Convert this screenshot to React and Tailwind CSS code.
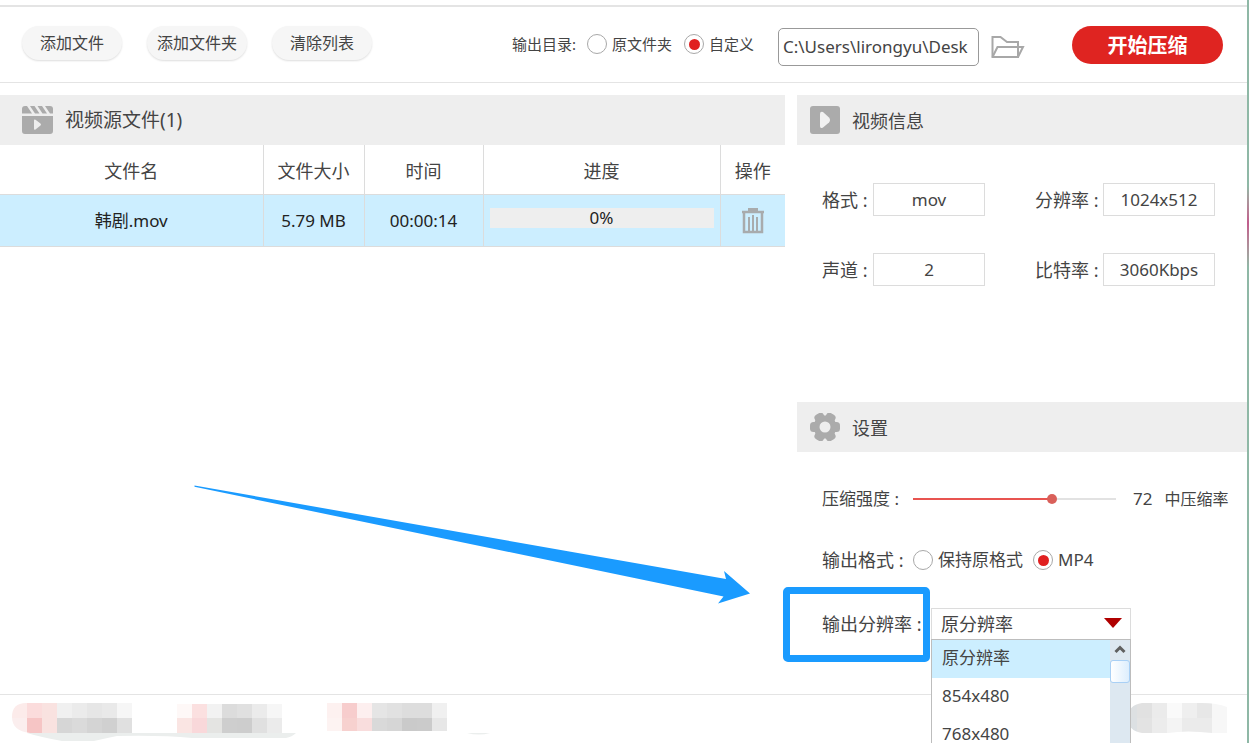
import { useState } from 'react'

const RESOLUTIONS = ['原分辨率', '854x480', '768x480']

const FILES = [
  { name: '韩剧.mov', size: '5.79 MB', time: '00:00:14', progress: 0 },
]

const MOSAICS = [
  {
    className: 'ml-3 w-[120px]',
    clip: 'M14 0 H120 V30 H18 Q0 28 0 14 Q0 0 14 0Z',
    smear: 'M15 30 H284 Q280 34 274 35 H180 Q150 32 105 33 Q95 35 82 38 H50 Q28 34 15 30Z',
    rows: [
      ['#fcebea', '#fbdcdc', '#f9e2e0', '#f0f0f0', '#ebebeb', '#e6e6e6', '#e9e9e9', '#f6f6f6'],
      ['#fbeeee', '#f6c5c5', '#f9e2e0', '#d6d6d6', '#dadada', '#d4d4d4', '#d0d0d0', '#e0e0e0'],
    ],
  },
  {
    className: 'ml-[45px] w-[105px]',
    clip: 'M0 1 H105 V30 H0Z',
    rows: [
      ['#fef8f7', '#fbe0e0', '#f2f2f2', '#dcdcdc', '#e0e0e0', '#ebebeb', '#f6f6f6'],
      ['#fae5e3', '#f9d8da', '#e4e4e2', '#cecece', '#cdcdcd', '#e0e0e0', '#ebebeb'],
    ],
  },
  {
    className: 'ml-[45px] w-[120px]',
    clip: 'M0 0 H120 V28 H0Z',
    smear: 'M140 30 H163 Q152 33 140 30Z',
    rows: [
      ['#fdf1f0', '#f7cdcd', '#fdefef', '#e5e5e5', '#e1e1e1', '#dddddd', '#dddddd', '#f0f0f0'],
      ['#fdf3f2', '#f7d1cf', '#f9dddd', '#d9d9d9', '#d6d6d6', '#cacaca', '#cbcbcb', '#e7e7e7'],
    ],
  },
]

const RIGHT_MOSAIC = {
  className: 'ml-auto mr-5 w-[105px]',
  clip: 'M20 0 Q60 -1 80 0 Q95 0 105 4 V30 H90 Q65 27 46 30 H20 Q6 28 6 15 Q6 2 20 0Z',
  rows: [
    ['#dde0e2', '#e1e1e1', '#ebebeb', '#fafafa', '#efefef', '#e7e7e7', '#f7f7f7'],
    ['#dce0e3', '#e3e3e3', '#ececec', '#f4f4f4', '#ebebeb', '#ebebeb', '#f7f7f7'],
  ],
}

function Mosaic({ id, rows, clip, smear, className }) {
  return (
    <svg className={`h-[30px] shrink-0 overflow-visible ${className}`} viewBox={`0 0 ${rows[0].length * 15} 30`} aria-hidden="true">
      <clipPath id={id}>
        <path d={clip} />
      </clipPath>
      {smear ? <path d={smear} fill="#ebeeed" /> : null}
      <g clipPath={`url(#${id})`} shapeRendering="crispEdges">
        {rows.map((row, y) => row.map((fill, x) => (
          <rect key={`${x}-${y}`} x={x * 15} y={y * 15} width="15" height="15" fill={fill} />
        )))}
      </g>
    </svg>
  )
}

function ClapperIcon() {
  return (
    <svg className="h-7 w-[31px]" viewBox="0 0 31 28" fill="#ababab" aria-hidden="true">
      <path d="M3 0 H5 L10 7.5 H0 V3 Q0 0 3 0Z" />
      <path d="M8 0 H12.5 L17.5 7.5 H13Z" />
      <path d="M15.5 0 H20 L25 7.5 H20.5Z" />
      <path d="M23 0 H28 Q31 0 31 3 V7.5 H28Z" />
      <path fillRule="evenodd" d="M0 10 H31 V25 Q31 28 28 28 H3 Q0 28 0 25Z M12 14.5 V22.5 Q12 24.5 13.5 23.5 L18.5 19.5 Q19.5 18.5 18.5 17.5 L13.5 13.8 Q12 13 12 14.5Z" />
    </svg>
  )
}

function PlayIcon() {
  return (
    <svg className="h-7 w-[30px]" viewBox="0 0 30 28" aria-hidden="true">
      <rect width="30" height="28" rx="3" fill="#ababab" />
      <path d="M10 8 Q10 5 13 6 L19 11.500 Q21 14 19 16.500 L13 21.500 Q10 23 10 20Z" fill="#f2f2f2" />
    </svg>
  )
}

function GearIcon() {
  return (
    <svg className="h-7 w-[30px]" viewBox="0 0 30 28" fill="#ababab" aria-hidden="true">
      <circle cx="15" cy="14" r="11.500" />
      {[0, 60, 120].map((angle) => (
        <rect key={angle} x="0" y="9" width="30" height="10" rx="3.500" transform={`rotate(${angle} 15 14)`} />
      ))}
      <circle cx="15" cy="14" r="5.500" fill="#eeeeee" />
    </svg>
  )
}

function TrashIcon() {
  return (
    <svg className="h-[26px] w-6" viewBox="0 0 24 26" fill="none" stroke="#a8abad" aria-hidden="true">
      <path d="M7 1.500 H17" strokeWidth="3" />
      <path d="M1 4 H23" strokeWidth="2.500" />
      <path d="M3 4 V24 H21 V4" strokeWidth="2.500" />
      <path d="M8 9 V23 M12 7 V23 M16 9 V23" strokeWidth="2" />
    </svg>
  )
}

function FolderIcon() {
  return (
    <svg className="h-6 w-[34px]" viewBox="0 0 34 24" fill="none" stroke="#a8a8a8" strokeWidth="2" aria-hidden="true">
      <path d="M1.500 22 V2 H9.500 L16 7 H27 V22Z" />
      <path d="M1.500 22 L6.500 12 H32 L27 22" />
    </svg>
  )
}

function PanelHeader({ icon, children, className = 'pl-[13px]' }) {
  return (
    <div className={`flex h-[50px] shrink-0 items-center gap-3 bg-[#eeeeee] ${className}`}>
      {icon}
      <h2 className="pt-[2px]">{children}</h2>
    </div>
  )
}

function ToolButton({ children }) {
  return (
    <button type="button" className="h-[34px] w-[100px] whitespace-nowrap rounded-full bg-[#f6f6f6] text-base shadow-[0_1px_2px_#00000022]">
      {children}
    </button>
  )
}

function Radio({ name, label, checked, onChange }) {
  return (
    <label className="flex items-center gap-[5px] whitespace-nowrap">
      <input
        type="radio"
        name={name}
        checked={checked}
        onChange={onChange}
        className="grid size-5 appearance-none place-content-center rounded-full border border-[#a8a8a8] bg-white before:size-[11px] before:rounded-full checked:before:bg-[#e02020]"
      />
      {label}
    </label>
  )
}

function InfoField({ id, label, value, labelClass }) {
  return (
    <div className="flex items-center">
      <label htmlFor={id} className={`whitespace-nowrap ${labelClass}`}>{label} :</label>
      <input id={id} readOnly value={value} className="h-[33px] w-28 border border-[#dcdcdc] bg-white text-center text-[17px]" />
    </div>
  )
}

function FileTable() {
  return (
    <table className="w-full table-fixed border-collapse text-center">
      <colgroup>
        <col />
        <col className="w-[101px]" />
        <col className="w-[119px]" />
        <col className="w-[237px]" />
        <col className="w-[65px]" />
      </colgroup>
      <thead>
        <tr className="h-[49px] border-b border-[#dcdcdc]">
          {['文件名', '文件大小', '时间', '进度', '操作'].map((title) => (
            <th key={title} className="border-r border-[#dcdcdc] pt-1 font-normal last:border-r-0">{title}</th>
          ))}
        </tr>
      </thead>
      <tbody className="text-[17px]">
        {FILES.map((file) => (
          <tr key={file.name} className="h-[52px] border-b border-[#dcdcdc] bg-[#cceeff] text-[#222222]">
            <td className="border-r border-[#dcdcdc] pt-[2px]">{file.name}</td>
            <td className="border-r border-[#dcdcdc] pt-[2px]">{file.size}</td>
            <td className="border-r border-[#dcdcdc] pt-[2px]">{file.time}</td>
            <td className="border-r border-[#dcdcdc] px-[6px] pb-1">
              <div role="progressbar" aria-valuenow={file.progress} className="h-5 bg-[#eeeeee] leading-5">
                {file.progress}%
              </div>
            </td>
            <td>
              <button type="button" aria-label="删除" className="align-middle"><TrashIcon /></button>
            </td>
          </tr>
        ))}
      </tbody>
    </table>
  )
}

function ResolutionSelect() {
  const [value, setValue] = useState(RESOLUTIONS[0])

  return (
    <div className="relative w-[200px]">
      <select
        id="resolution"
        value={value}
        onChange={(e) => setValue(e.target.value)}
        className="block h-8 w-full appearance-none border border-[#dcdcdc] bg-white pl-[9px] text-lg leading-7"
      >
        {RESOLUTIONS.map((item) => <option key={item}>{item}</option>)}
      </select>
      <svg className="pointer-events-none absolute right-[9px] top-[10px] h-[10px] w-[18px]" viewBox="0 0 18 10" aria-hidden="true">
        <path d="M0 0H18L9 10Z" fill="#b00000" />
      </svg>
      <div className="absolute left-0 top-[31px] z-10 flex w-full border border-[#bdbdbd] bg-white">
        <ul role="listbox" className="flex-1 text-[17px]">
          {RESOLUTIONS.map((item) => (
            <li
              key={item}
              role="option"
              aria-selected={item === value}
              onClick={() => setValue(item)}
              className={`flex h-[38px] items-center pb-px pl-[10px] ${item === value ? 'bg-[#cceeff]' : ''}`}
            >
              {item}
            </li>
          ))}
        </ul>
        <div className="flex w-5 flex-col items-center bg-[#dde8f1]">
          <svg className="h-5 w-3" viewBox="0 0 12 20" fill="none" stroke="#606060" strokeWidth="3" aria-hidden="true">
            <path d="M1.500 12 L6 7.500 L10.500 12" />
          </svg>
          <div className="h-[23px] w-full rounded-[3px] border border-[#a9d0f5] bg-linear-to-r from-white to-[#ddeefd]" />
        </div>
      </div>
    </div>
  )
}

function Settings() {
  const [strength, setStrength] = useState(72)
  const [format, setFormat] = useState('mp4')
  const min = 10
  const max = 99
  const percent = ((strength - min) / (max - min)) * 100

  return (
    <div className="flex flex-col pl-[25px] pt-[31px]">
      <div className="flex h-8 items-center whitespace-nowrap text-[17px]">
        <label htmlFor="strength" className="w-[91px]">压缩强度 :</label>
        <input
          id="strength"
          type="range"
          min={min}
          max={max}
          value={strength}
          onChange={(e) => setStrength(Number(e.target.value))}
          className="h-[2px] w-[203px] appearance-none [&::-webkit-slider-thumb]:size-[10px] [&::-webkit-slider-thumb]:appearance-none [&::-webkit-slider-thumb]:rounded-full [&::-webkit-slider-thumb]:bg-[#d9605a]"
          style={{ background: `linear-gradient(to right, #e85450 ${percent}%, #e2e2e2 ${percent}%)` }}
        />
        <span className="ml-[17px]">{strength}</span>
        <span className="ml-3 text-base">中压缩率</span>
      </div>
      <div className="mt-[29px] flex h-8 items-center text-lg">
        <span className="w-[91px] whitespace-nowrap">输出格式 :</span>
        <div className="flex items-center gap-[10px] text-[17px]">
          <Radio name="format" label="保持原格式" checked={format === 'keep'} onChange={() => setFormat('keep')} />
          <Radio name="format" label="MP4" checked={format === 'mp4'} onChange={() => setFormat('mp4')} />
        </div>
      </div>
      <div className="relative mt-8 flex h-8 items-center text-lg">
        <label htmlFor="resolution" className="w-[109px] whitespace-nowrap">输出分辨率 :</label>
        <ResolutionSelect />
        <div className="pointer-events-none absolute -left-[39px] -top-[21px] h-[75px] w-[147px] rounded-[5px] border-[7px] border-[#1a9bff]" />
      </div>
    </div>
  )
}

export default function App() {
  const [target, setTarget] = useState('custom')

  return (
    <div className="flex h-screen overflow-hidden bg-white font-['Noto_Sans','Noto_Sans_CJK_SC',sans-serif] text-lg text-[#444444]">
      <div className="relative flex min-w-0 flex-1 flex-col">
        <header className="mt-[5px] flex h-[78px] shrink-0 items-center border-b border-t-2 border-[#e4e4e4] pl-[22px] pr-6">
          <div className="flex gap-[25px] pb-1">
            <ToolButton>添加文件</ToolButton>
            <ToolButton>添加文件夹</ToolButton>
            <ToolButton>清除列表</ToolButton>
          </div>
          <div className="ml-auto flex items-center whitespace-nowrap text-[15px]">
            <span className="w-[75px]">输出目录:</span>
            <div className="flex w-[191px] items-center gap-3">
              <Radio name="target" label="原文件夹" checked={target === 'source'} onChange={() => setTarget('source')} />
              <Radio name="target" label="自定义" checked={target === 'custom'} onChange={() => setTarget('custom')} />
            </div>
          </div>
          <div className="flex items-center gap-3 pt-1">
            <input
              aria-label="输出目录"
              defaultValue="C:\Users\lirongyu\Desk"
              className="h-[38px] w-[201px] rounded-[5px] border border-[#999999] px-1 text-[17px]"
            />
            <button type="button" aria-label="打开文件夹"><FolderIcon /></button>
          </div>
          <button type="button" className="ml-[47px] h-[38px] w-[151px] rounded-full bg-[#df2421] pt-[2px] text-xl font-bold text-white">
            开始压缩
          </button>
        </header>

        <main className="flex min-h-0 flex-1 gap-3 pt-3">
          <section className="min-w-0 flex-1">
            <PanelHeader icon={<ClapperIcon />} className="pl-[22px] text-[19px]">视频源文件(1)</PanelHeader>
            <FileTable />
          </section>

          <aside className="flex w-[450px] shrink-0 flex-col">
            <PanelHeader icon={<PlayIcon />}>视频信息</PanelHeader>
            <div className="grid h-[257px] shrink-0 grid-cols-[163px_auto] content-start gap-x-[50px] gap-y-[37px] pl-[25px] pt-[38px]">
              <InfoField id="format" label="格式" value="mov" labelClass="w-[51px]" />
              <InfoField id="size" label="分辨率" value="1024x512" labelClass="w-[68px]" />
              <InfoField id="channel" label="声道" value="2" labelClass="w-[51px]" />
              <InfoField id="bitrate" label="比特率" value="3060Kbps" labelClass="w-[68px]" />
            </div>
            <PanelHeader icon={<GearIcon />}>设置</PanelHeader>
            <Settings />
          </aside>
        </main>

        <footer className="flex h-[49px] shrink-0 items-start border-t border-[#e4e4e4] pt-2">
          {MOSAICS.map((item, i) => <Mosaic key={i} id={`mosaic-${i}`} {...item} />)}
          <Mosaic id="mosaic-right" {...RIGHT_MOSAIC} />
        </footer>

        {/* pointer to the resolution setting */}
        <svg className="pointer-events-none absolute right-[497px] top-[485px] h-[120px] w-[556px]" viewBox="0 0 556 120" fill="#1a9bff" aria-hidden="true">
          <path d="M0.500 0.500 L532 94 L530 86 L556 108.500 L524 118.500 L529.500 111.500 L0.500 1.800Z" />
        </svg>
      </div>
      <div className="w-[2px] shrink-0 bg-linear-to-b from-[#8fb8a6] from-25% via-[#c05c8c] via-30% to-[#8fb8a6] to-36%" />
    </div>
  )
}
